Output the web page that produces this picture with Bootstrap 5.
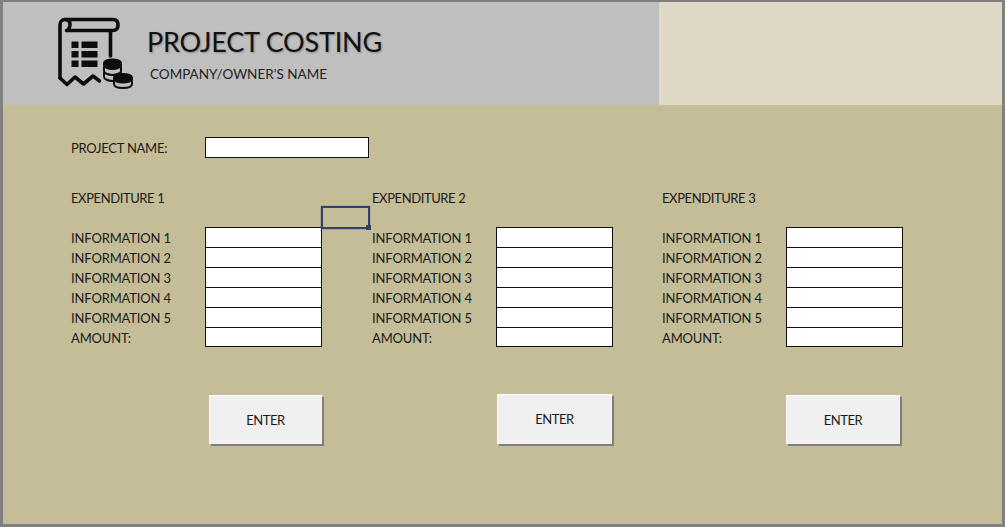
<!DOCTYPE html>
<html lang="en">
<head>
    <meta charset="UTF-8">
    <meta name="viewport" content="width=device-width, initial-scale=1.0">
    <title>Project Costing</title>
    <link rel="stylesheet" href="https://cdn.jsdelivr.net/npm/bootstrap@5.3.0/dist/css/bootstrap.min.css">
    <style>
        html, body { height: 100%; overflow: hidden; }
        body { font-family: Lato, "Liberation Sans", sans-serif; color: #1a1a1a; background: #808080; }
        .frame { width: 1005px; height: 527px; border: solid #808080; border-width: 2px 3px 3px; background: #c4bd97; position: relative; }
        .top-band { height: 103px; }
        .top-left { width: 656px; background: #bfbfbf; padding: 13px 0 0 52px; }
        .top-right { background: #ddd9c4; }
        .logo { width: 80px; height: 78px; flex: none; }
        .title-wrap { margin-left: 12px; }
        .main-title { font-size: 27px; letter-spacing: -.2px; line-height: 34px; margin: 10px 0 0; font-weight: 400; color: #111; text-shadow: 1px 1px 2px #8a8a8a; }
        .sub-title { font-size: 13.500px; line-height: 18px; margin: 6px 0 0 3px; color: #222; }
        .sheet { padding: 32px 0 0 68px; font-size: 13px; letter-spacing: -.15px; }
        .name-row { height: 21px; }
        .name-label { width: 134px; letter-spacing: -.25px; padding-top: 2px; }
        .field { border: 1px solid #111; border-bottom: 0; border-radius: 0; padding: 0 4px; min-height: 0; background: #fff; display: block; }
        .name-field { width: 164px; height: 21px; border-bottom: 1px solid #111; }
        .exp-grid { display: grid; grid-template-columns: 301px 290px 1fr; margin-top: 30px; }
        .exp-title { height: 39px; line-height: 20px; letter-spacing: -.4px; }
        .info-row { height: 20px; line-height: 23px; }
        .info-label { width: 134px; flex: none; }
        .col-two .info-label, .col-three .info-label { width: 124px; }
        .info-field { width: 117px; height: 20px; }
        .info-row:nth-child(7) .info-field { border-bottom: 1px solid #111; }
        .enter-btn { display: block; border: 0; border-radius: 0; background: #f0f0f0; color: #1a1a1a; font-size: 13px; letter-spacing: -.5px; padding: 2px 0 0; box-shadow: inset 1px 1px 0 #fff, 2px 2px 0 #7f7f7f; }
        .col-one .enter-btn { width: 113px; height: 49px; margin: 48px 0 0 138px; }
        .col-two .enter-btn { width: 115px; height: 50px; margin: 47px 0 0 125px; }
        .col-three .enter-btn { width: 114px; height: 49px; margin: 48px 0 0 124px; padding-top: 3px; }
        .cell-cursor { position: absolute; left: 318px; top: 204px; width: 49px; height: 23px; border: 2px solid #353f6e; box-shadow: 0 0 1px #353f6e; pointer-events: none; }
        .cell-cursor::after { content: ""; position: absolute; right: -3px; bottom: -3px; width: 5px; height: 5px; background: #353f6e; }
    </style>
</head>
<body class="m-0">
    <div class="frame">
        <!-- Шапка -->
        <div class="top-band d-flex">
            <div class="top-left d-flex">
                <svg class="logo" viewBox="55 15 80 78" aria-hidden="true">
                    <g fill="none" stroke="#0d0d0d" stroke-width="3.600" stroke-linejoin="round" stroke-linecap="round">
                        <path d="M60 78V25c0-3 2-5.500 5-5.500h48c3 0 5 2 5 5.500s-2 5.500-5 5.500H67"/>
                        <path d="M65 19.500c3 0 5 2 5 5s-2 6-3.500 6"/>
                        <path d="M110.500 31v25"/>
                        <path d="M60 78l7 6.500 8-7.500 8.500 7 9.500-8 6.500 5"/>
                    </g>
                    <g fill="#0d0d0d">
                        <rect x="71.500" y="41.500" width="7" height="6.500"/><rect x="81.500" y="41.500" width="16" height="6.500"/>
                        <rect x="71.500" y="51" width="7" height="6.500"/><rect x="81.500" y="51" width="16" height="6.500"/>
                        <rect x="71.500" y="60.500" width="7" height="6.500"/><rect x="81.500" y="60.500" width="16" height="6.500"/>
                    </g>
                    <g fill="#bfbfbf" stroke="#0d0d0d" stroke-width="2">
                        <path d="M104 77v-4c0-2 4-3.500 8.500-3.500s8.500 1.500 8.500 3.500v4c0 2-4 4-8.500 4s-8.500-2-8.500-4z"/>
                        <path d="M104 71v-4c0-2 4-3.500 8.500-3.500s8.500 1.500 8.500 3.500v4c0 2-4 4-8.500 4s-8.500-2-8.500-4z"/>
                        <path d="M104 65v-2c0-2 4-3.500 8.500-3.500s8.500 1.500 8.500 3.500v2c0 2-4 4-8.500 4s-8.500-2-8.500-4z" fill="#0d0d0d"/>
                        <path d="M114 84v-3c0-2 4-3.500 9-3.500s9 1.500 9 3.500v3c0 2.500-4 4-9 4s-9-1.500-9-4z"/>
                        <path d="M114 79v-1.500c0-2 4-3.500 9-3.500s9 1.500 9 3.500v1.500c0 2-4 3.500-9 3.500s-9-1.500-9-3.500z" fill="#0d0d0d"/>
                    </g>
                </svg>
                <div class="title-wrap">
                    <h1 class="main-title">PROJECT COSTING</h1>
                    <p class="sub-title">COMPANY/OWNER'S NAME</p>
                </div>
            </div>
            <div class="top-right flex-grow-1"></div>
        </div>

        <!-- Форма -->
        <div class="sheet">
            <div class="name-row d-flex align-items-center">
                <label class="name-label" for="project-name">PROJECT NAME:</label>
                <input class="field name-field" id="project-name" type="text">
            </div>

            <div class="exp-grid" id="exp-grid"></div>
        </div>

        <div class="cell-cursor"></div>
    </div>

    <script>
        // Три одинаковых блока расходов
        const grid = document.getElementById('exp-grid');
        ['one', 'two', 'three'].forEach((name, i) => {
            const labels = ['INFORMATION 1', 'INFORMATION 2', 'INFORMATION 3', 'INFORMATION 4', 'INFORMATION 5', 'AMOUNT:'];
            let html = `<div class="col-${name}"><div class="exp-title">EXPENDITURE ${i + 1}</div>`;
            labels.forEach(label => {
                html += `<div class="info-row d-flex"><span class="info-label">${label}</span><input class="field info-field" type="text" aria-label="${label}"></div>`;
            });
            html += '<button type="button" class="btn enter-btn">ENTER</button></div>';
            grid.innerHTML += html;
        });
    </script>
    <script src="https://cdn.jsdelivr.net/npm/bootstrap@5.3.0/dist/js/bootstrap.bundle.min.js"></script>
</body>
</html>
